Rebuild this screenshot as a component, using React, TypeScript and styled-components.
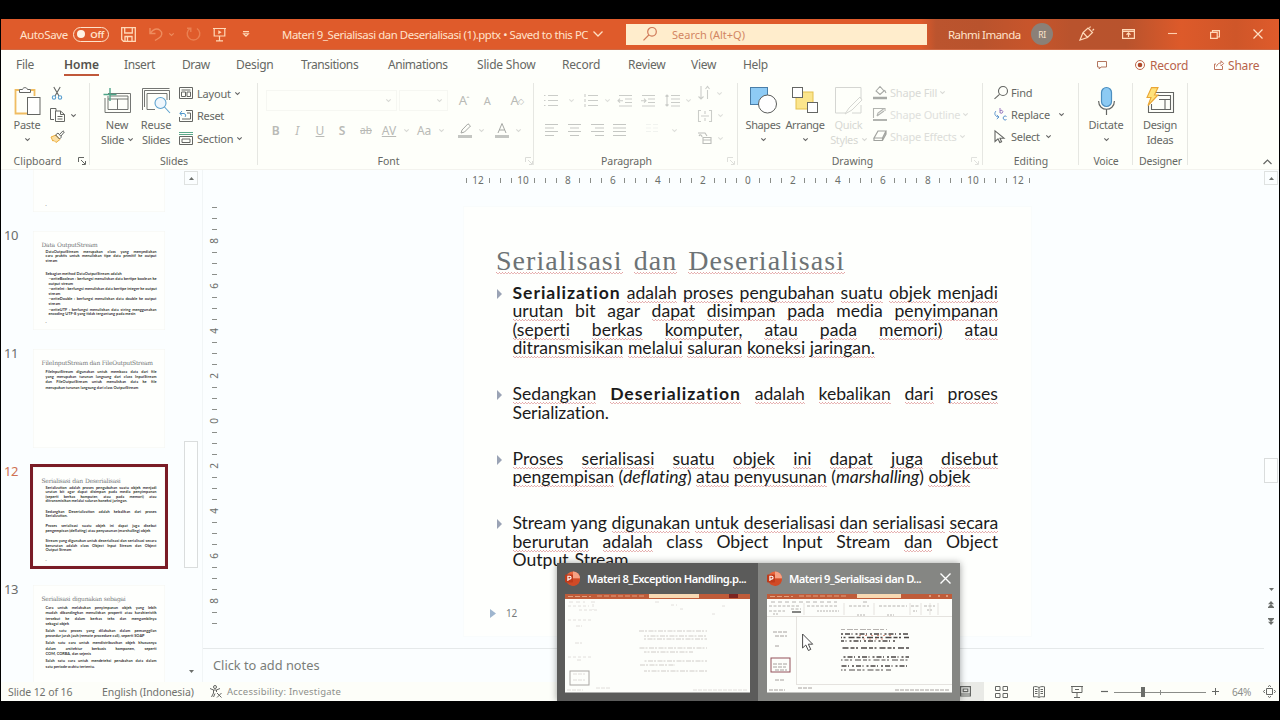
import React from "react";
import styled, { createGlobalStyle, css } from "styled-components";

const ui = `"Noto Sans", "Open Sans", sans-serif`;

const Global = createGlobalStyle`
  * { box-sizing: border-box; }
  html, body { margin: 0; padding: 0; background: #000; }
  body { font-family: ${ui}; overflow: hidden; }
`;

const Screen = styled.div`
  position: relative;
  width: 1280px;
  height: 720px;
  padding: 19px 1px 19px;
  background: #000;
  overflow: hidden;
`;
const Window = styled.div`
  display: flex;
  flex-direction: column;
  width: 1278px;
  height: 682px;
  background: #fbfeff;
  overflow: hidden;
`;

/* ---------- shared parts ---------- */
const Cell = styled.div<{ $w: number; $j?: string; $ml?: number }>`
  display: flex;
  flex: none;
  align-items: center;
  justify-content: ${(p) => p.$j || "center"};
  width: ${(p) => p.$w}px;
  margin-left: ${(p) => p.$ml || 0}px;
`;
const Label = styled.span<{ $size?: number; $ls?: number; $color?: string; $bold?: boolean }>`
  font-size: ${(p) => p.$size || 12}px;
  letter-spacing: ${(p) => p.$ls ?? -0.3}px;
  color: ${(p) => p.$color || "inherit"};
  font-weight: ${(p) => (p.$bold ? 600 : 400)};
  white-space: nowrap;
`;
const Svg = styled.svg<{ $o?: number }>`
  display: block;
  flex: none;
  overflow: visible;
  fill: none;
  opacity: ${(p) => p.$o ?? 1};
`;

type IconProps = { w: number; h: number; c?: string; sw?: number; o?: number; children: React.ReactNode };
const Icon = ({ w, h, c = "#646663", sw = 1.1, o, children }: IconProps) => (
  <Svg width={w} height={h} viewBox={`0 0 ${w} ${h}`} stroke={c} strokeWidth={sw} $o={o}>
    {children}
  </Svg>
);
const Chevron = ({ c = "#666", o = 1 }: { c?: string; o?: number }) => (
  <Icon w={5} h={3} c={c} sw={1.1} o={o}>
    <path d="M.3 .4 2.5 2.4 4.7 .4" />
  </Icon>
);

/* ---------- title bar ---------- */
const TitleBar = styled.header`
  display: flex;
  flex: none;
  align-items: center;
  height: 31px;
  padding-left: 19px;
  color: #ffe3cb;
  background: linear-gradient(90deg, #df5b2b 0, #df5b2b 920px, #bb542e 935px, #b9532d 980px, #c8552b 1030px, #b9532d 1070px, #b8532d 1125px, #dd5a2a 1180px, #cf5629 1235px, #df5b2b 1278px);
  border-bottom: 1px solid #cf6a45;
`;
const Toggle = styled.div`
  display: flex;
  flex: none;
  align-items: center;
  justify-content: space-between;
  width: 36px;
  height: 15px;
  padding: 0 4px 0 3px;
  border: 1.4px solid #ffe3cb;
  border-radius: 8px;
`;
const Knob = styled.i`
  width: 8px;
  height: 8px;
  border-radius: 50%;
  background: #fff3e3;
`;
const Search = styled.div`
  display: flex;
  flex: none;
  align-items: center;
  width: 301px;
  height: 21px;
  margin-left: 20px;
  padding-left: 17px;
  gap: 15px;
  background: #ffedcc;
`;
const Avatar = styled.div`
  display: grid;
  place-items: center;
  width: 22px;
  height: 22px;
  border-radius: 50%;
  background: #8b8077;
`;

/* ---------- tabs ---------- */
const Tabs = styled.nav`
  display: flex;
  flex: none;
  height: 28px;
  padding-left: 15px;
  color: #666864;
  background: #fefffb;
`;
const Tab = styled.div<{ $w: number; $active?: boolean }>`
  display: flex;
  flex: none;
  width: ${(p) => p.$w}px;
  height: 28px;
  padding-top: 6px;
  line-height: 17px;
  ${(p) =>
    p.$active &&
    css`
      color: #55524d;
      span {
        height: 20px;
        border-bottom: 2px solid #c0583a;
      }
    `}
`;
const TabActions = styled.div`
  display: flex;
  align-items: center;
  height: 30px;
  color: #b8634a;
`;

/* ---------- ribbon ---------- */
const Ribbon = styled.div`
  display: flex;
  flex: none;
  height: 92px;
  color: #666864;
  background: #fefffa;
  border-bottom: 1px solid #f3f3ee;
`;
const Group = styled.section<{ $w: number }>`
  display: flex;
  flex: none;
  flex-direction: column;
  width: ${(p) => p.$w}px;
  height: 91px;
  background: linear-gradient(#e6e7e2, #e6e7e2) right 5px / 1px 82px no-repeat;
`;
const GroupBody = styled.div<{ $pl?: number }>`
  display: flex;
  height: 76px;
  padding-left: ${(p) => p.$pl || 0}px;
`;
const GroupName = styled.div<{ $shift?: number }>`
  display: flex;
  align-items: center;
  justify-content: center;
  height: 14px;
  padding-left: ${(p) => p.$shift || 0}px;
`;
const Launch = styled.div<{ $ml: number; $o?: number }>`
  margin-left: ${(p) => p.$ml}px;
  opacity: ${(p) => p.$o ?? 1};
`;
const BigButton = styled.div<{ $w: number; $o?: number }>`
  display: flex;
  flex: none;
  flex-direction: column;
  align-items: center;
  width: ${(p) => p.$w}px;
  padding-top: 6px;
  opacity: ${(p) => p.$o ?? 1};
`;
const BigIcon = styled.div`
  display: grid;
  place-items: center;
  height: 33px;
`;
const BigLine = styled.div`
  display: flex;
  align-items: center;
  gap: 4px;
  height: 15px;
  line-height: 15px;
`;
const Stack = styled.div<{ $w: number; $ml?: number; $pt?: number; $rh?: number }>`
  display: grid;
  flex: none;
  grid-auto-rows: ${(p) => p.$rh || 22.5}px;
  width: ${(p) => p.$w}px;
  margin-left: ${(p) => p.$ml || 0}px;
  padding-top: ${(p) => p.$pt ?? 4}px;
`;
const Row = styled.div<{ $gap?: number; $o?: number; $pl?: number }>`
  display: flex;
  align-items: center;
  gap: ${(p) => p.$gap ?? 4}px;
  padding-left: ${(p) => p.$pl ?? 0}px;
  opacity: ${(p) => p.$o ?? 1};
`;
const TwoRows = styled.div`
  display: grid;
  grid-template-rows: 22px 22px;
  row-gap: 8px;
  padding-top: 11px;
`;
const ToolRow = styled.div`
  display: flex;
  align-items: center;
  color: #b9bab6;
`;
const Combo = styled.div<{ $w: number; $ml?: number }>`
  display: flex;
  align-items: center;
  justify-content: flex-end;
  width: ${(p) => p.$w}px;
  height: 21px;
  margin-left: ${(p) => p.$ml || 0}px;
  padding-right: 5px;
  border: 1px solid #f6f7f2;
`;
const Strike = styled.span`
  font-size: 10px;
  text-decoration: line-through;
`;
const Under = styled.span`
  font-size: 12px;
  text-decoration: underline;
`;

/* ---------- work area ---------- */
const Work = styled.main`
  display: flex;
  flex: none;
  height: 512px;
  background: #fbfeff;
`;
const SlideList = styled.aside`
  width: 183px;
  height: 512px;
  overflow: hidden;
`;
const SlideRow = styled.div<{ $first?: boolean }>`
  display: flex;
  height: 118px;
  margin-top: ${(p) => (p.$first ? -60 : 0)}px;
`;
const SlideNo = styled.div<{ $on?: boolean }>`
  width: 29px;
  padding: 0 0 0 3px;
  font-size: 13px;
  line-height: 15px;
  letter-spacing: -0.4px;
  color: ${(p) => (p.$on ? "#cf7152" : "#6b6d6b")};
`;
const Thumb = styled.div<{ $on?: boolean }>`
  display: flex;
  flex-direction: column;
  width: 138px;
  height: 105px;
  padding: 9px 8.5px 0 8.5px;
  border: 3px solid transparent;
  background: #fefffd;
  background-clip: padding-box;
  box-shadow: inset 0 0 0 0.5px #f3f5f2;
  ${(p) =>
    p.$on &&
    css`
      border-color: #7a1c26;
    `}
`;
const ThumbTitle = styled.div<{ $w: number }>`
  width: ${(p) => p.$w}px;
  height: 10px;
  font: 6px/10px "DejaVu Serif", serif;
  letter-spacing: -0.25px;
  white-space: nowrap;
  text-align-last: justify;
  color: #777a7c;
`;
const ThumbPara = styled.div<{ $mt?: number; $lh?: number; $in?: number }>`
  margin-top: ${(p) => p.$mt || 0}px;
  padding-left: ${(p) => 4 + (p.$in || 0)}px;
  font: 700 3.9px/${(p) => p.$lh || 4.4}px Lato, sans-serif;
  color: #333;
`;
const ThumbLine = styled.div<{ $end?: boolean }>`
  white-space: nowrap;
  text-align-last: ${(p) => (p.$end ? "left" : "justify")};
`;
const ScrollTrack = styled.div<{ $w: number }>`
  display: flex;
  flex: none;
  flex-direction: column;
  align-items: center;
  width: ${(p) => p.$w}px;
  height: 512px;
  padding-top: 1px;
`;
const ScrollButton = styled.div<{ $plain?: boolean }>`
  display: grid;
  flex: none;
  place-items: center;
  width: 14px;
  height: 14px;
  border: 1px solid ${(p) => (p.$plain ? "transparent" : "#dfe2e1")};
`;
const ScrollThumb = styled.div<{ $h: number; $mt: number }>`
  flex: none;
  width: 14px;
  height: ${(p) => p.$h}px;
  margin-top: ${(p) => p.$mt}px;
  border: 1px solid #dadddd;
  background: #fdffff;
`;
const Spacer = styled.div<{ $h: number }>`
  flex: none;
  height: ${(p) => p.$h}px;
`;
const Editor = styled.div`
  display: flex;
  flex-direction: column;
  width: 1062px;
  margin-left: 4px;
  border-left: 1px solid #f1f5f6;
`;
const HRuler = styled.div`
  display: flex;
  flex: none;
  height: 20px;
  margin-left: 258px;
  align-items: center;
`;
const HMark = styled.div`
  display: flex;
  flex: none;
  justify-content: center;
  width: 11.25px;
  font-size: 10px;
  line-height: 12px;
  color: #6c6f6b;
`;
const HTick = styled.i`
  width: 1px;
  height: 5px;
  background: #8b8e8a;
`;
const Stage = styled.div`
  display: flex;
  flex: none;
  height: 459px;
  border-bottom: 1px solid #e5e9ea;
`;
const VRuler = styled.div`
  width: 22px;
  padding-top: 11.5px;
`;
const VMark = styled.div`
  display: grid;
  place-items: center;
  height: 11.25px;
  font-size: 10px;
  line-height: 10px;
  color: #6c6f6b;
`;
const VNum = styled.span`
  transform: rotate(-90deg);
`;
const VTick = styled.i`
  width: 5px;
  height: 1px;
  background: #8b8e8a;
`;
const Slide = styled.article`
  width: 567px;
  height: 429px;
  margin: 17px 0 0 239px;
  padding: 40px 32px 0;
  background: #fefffd;
  box-shadow: 0 0 0 1px #f9fcfc;
`;
/* two offset dotted rows make the zigzag of the spelling mark */
const Wavy = styled.span`
  background:
    linear-gradient(90deg, #e2a4a4 50%, transparent 50%) 0 calc(100% - 1px) / 3px 1px repeat-x,
    linear-gradient(90deg, transparent 50%, #e9b9b9 50%) 0 100% / 3px 1px repeat-x;
`;
const SlideTitle = styled.h1`
  width: 349px;
  height: 28px;
  margin: 0;
  font: 400 28px/28px "Liberation Serif", serif;
  letter-spacing: 1.05px;
  white-space: nowrap;
  text-align-last: justify;
  color: #6d7375;
  ${Wavy} {
    background-position: 0 calc(100% - 3px), 0 calc(100% - 2px);
  }
`;
const Bullets = styled.ul`
  margin: 9px 0 0;
  padding: 0;
  list-style: none;
`;
const Bullet = styled.li<{ $gap: number }>`
  display: flex;
  margin-bottom: ${(p) => p.$gap}px;
`;
const BulletMark = styled.div`
  width: 16.5px;
  padding: 5px 0 0 1px;
`;
const TextLine = styled.div<{ $w?: number; $ls?: number }>`
  width: ${(p) => p.$w || 485.5}px;
  font: 400 17.6px/18.45px Lato, sans-serif;
  font-variant-ligatures: none;
  letter-spacing: ${(p) => p.$ls || 0}px;
  white-space: nowrap;
  text-align-last: justify;
  color: #1b1b1b;
  b {
    letter-spacing: 0.95px;
  }
`;
const Footer = styled.div`
  display: flex;
  align-items: center;
  height: 14px;
  margin: 37px 0 0 -6px;
  gap: 10px;
`;
const Notes = styled.div`
  display: flex;
  align-items: center;
  height: 31px;
  padding-left: 10px;
`;

/* ---------- status bar ---------- */
const Status = styled.footer`
  display: flex;
  flex: none;
  align-items: center;
  height: 19px;
  color: #70726e;
  background: #fdfef9;
`;
const NormalView = styled.div`
  display: flex;
  align-items: center;
  width: 34px;
  height: 19px;
  margin-left: 606px;
  padding-left: 10px;
  background: #e9eae6;
`;

/* ---------- task switcher ---------- */
const Switcher = styled.div`
  position: absolute;
  left: 557px;
  top: 563px;
  display: flex;
  width: 403px;
  height: 138px;
  box-shadow: 0 0 7px rgba(0, 0, 0, 0.38);
`;
const TaskCard = styled.div<{ $hot?: boolean }>`
  display: flex;
  flex-direction: column;
  width: ${(p) => (p.$hot ? 202 : 201)}px;
  height: 138px;
  padding-left: ${(p) => (p.$hot ? 9 : 8)}px;
  background: ${(p) => (p.$hot ? "#858683" : "#5b5b5a")};
`;
const TaskHead = styled.div`
  display: flex;
  align-items: center;
  height: 31px;
  color: #fff;
`;
const Backdrop = styled.div`
  height: 19px;
  background: #000;
  position: absolute;
  left: 0;
  bottom: 0;
  width: 1280px;
`;
const Pointer = styled.div`
  position: absolute;
  left: 802px;
  top: 633px;
`;

/* ---------- drawings ---------- */
const PptLogo = () => (
  <Svg width="15" height="15" viewBox="0 0 15 15">
    <circle cx="8" cy="7.5" r="7" fill="#e8643c" />
    <path d="M8 .5a7 7 0 0 1 7 7H8z" fill="#f6a183" />
    <path d="M1.5 10.500A7 7 0 0 0 15 7.500H8z" fill="#d04a26" />
    <rect x="0" y="3.500" width="8" height="8" rx="1" fill="#bf3a1a" />
    <path d="M2.900 10V5.200h1.700a1.400 1.400 0 0 1 0 2.900H3" stroke="#fff" strokeWidth="1.100" />
  </Svg>
);

const Preview = ({ hot }: { hot?: boolean }) => {
  const ink = hot ? "#4a4644" : "#c4c0bd";
  const rows = hot
    ? [[40, 142], [43.5, 142], [47, 130], [54, 142], [63, 142], [66, 142], [72, 142], [76, 124]]
    : [[37, 142], [42, 142], [45, 142], [54, 142], [58, 128], [67, 142], [71, 110], [77, 142]];
  return (
    <Svg width="185" height="99" viewBox="0 0 185 99">
      <rect width="185" height="98.5" fill="#fdfefb" />
      <rect width="185" height="5" fill="#bf5c3a" />
      <rect x={hot ? 90 : 84} width={hot ? 44 : 50} height="4" fill="#f8d9b3" />
      <path d="M3 2.500H26M32 2H80" stroke="#eeb08f" strokeWidth=".8" strokeDasharray="5 2" />
      {!hot && <rect x="164" y="0" width="9" height="4" fill="#7d2420" />}
      {hot && <path d="M162 2h2M171 2h2M179 2h2" stroke="#ffd6b8" />}
      <g stroke={hot ? "#a3a19e" : "#dad8d5"} strokeWidth=".8">
        <path d={hot ? "M4 8H70M96 8H103" : "M4 8H20M26 8H31M90 8H95"} strokeDasharray="4 3" />
        {hot ? (
          <>
            <path d="M2 12H33M2 17H18M24 15H34M40 12H70M82 12H102M112 12H140M144 12H152M157 12H168" strokeDasharray="3 1.500" />
            <path d="M25 18H34" stroke="#333" strokeWidth="1.200" />
            <path d="M6 20H12M50 17H72M90 21H98M120 21H127M146 17H150M160 16H166" strokeDasharray="2 1" />
            <path d="M37 9V21M77 9V21M107 9V21M143 9V21M154 9V21M163 9V21M171 9V21M0 22.500H185M29.500 22V90M29 90.500H185" stroke="#dedcd8" />
          </>
        ) : (
          <path d="M3 12H24M28 10V16M14 16H32M106 11H112M115 15H120M157 12H162M147 20H152M3 26H26M3 63H26" strokeDasharray="3 2" />
        )}
      </g>
      {hot && <path d="M74 35.500H120" stroke="#b5b2af" strokeWidth="1" strokeDasharray="4 2 6 1" />}
      <g stroke={ink} strokeWidth={hot ? 1.5 : 0.8}>
        {rows.map(([y, x], i) => (
          <path
            key={y}
            d={`M${i % 3 && !hot ? 79 : 74} ${y}H${x}`}
            strokeDasharray={hot ? (i % 2 ? "4 1.500 2 3 6 2" : "2 2 5 1.500 1 3") : "5 1 2 1.500"}
            strokeDashoffset={i * 3}
            opacity={hot && i > 3 && i % 2 ? 0.65 : 1}
          />
        ))}
      </g>
      {hot && <path d="M92 41.500H124M96 45H116" stroke="#d8806c" strokeWidth=".8" strokeDasharray="2 4" />}
      <g stroke={hot ? "#8f8c89" : "#d8d6d3"} strokeWidth=".8" strokeDasharray="4 1">
        <path d={hot ? "M6 38H21M8 42H20M8 52H12M8 86H18" : "M11 32H17M10 49H17M12 66H17"} />
        <path d={hot ? "M6 70H20M6 73H19M8 76H20" : "M8 80H20M8 86H20"} />
        <path d="M2 96H18M31 94H46M128 96H182" />
      </g>
      <rect x={hot ? 4 : 5} y={hot ? 64 : 77} width="19" height="14" stroke={hot ? "#93505a" : "#a9a6a3"} />
    </Svg>
  );
};

/* ---------- data ---------- */
const tabs: [string, number, number][] = [
  ["File", 48, -0.3],
  ["Home", 60, 0],
  ["Insert", 58, -0.4],
  ["Draw", 54, -0.5],
  ["Design", 65, -0.3],
  ["Transitions", 87, -0.4],
  ["Animations", 89, -0.45],
  ["Slide Show", 85, -0.2],
  ["Record", 66, -0.2],
  ["Review", 63, -0.3],
  ["View", 52, -0.3],
  ["Help", 60, -0.3],
];

const W = ({ t }: { t: string }) => <Wavy>{t}</Wavy>;
/* words that start with an underscore carry the spelling mark */
const mark = (s: string) =>
  s.split(" ").map((w, i) => (
    <React.Fragment key={i}>
      {i > 0 && " "}
      {w.startsWith("_") ? <W t={w.slice(1)} /> : w}
    </React.Fragment>
  ));

const range = (a: number, b: number) => Array.from({ length: b - a + 1 }, (_, i) => a + i);

const ThumbText = ({ lines, mt, lh, inset, last = true }: { lines: string[]; mt?: number; lh?: number; inset?: number; last?: boolean }) => (
  <ThumbPara $mt={mt} $lh={lh} $in={inset}>
    {lines.map((l, i) => (
      <ThumbLine key={i} $end={last && i === lines.length - 1}>
        {l}
      </ThumbLine>
    ))}
  </ThumbPara>
);

const ListGlyph = ({ kind }: { kind: "bul" | "num" | "in" | "out" | "sp" }) => (
  <Icon w={15} h={13} c="#cbcdc9">
    <path d={kind === "bul" ? "M4 1.500H14M4 6.500H14M4 11.500H14M0 1.500h1.500M0 6.500h1.500M0 11.500h1.500" : kind === "num" ? "M4 1.500H14M4 6.500H14M4 11.500H14M1 0v3M1 5v3M1 10v3" : kind === "sp" ? "M6 1.500H15M6 5H15M6 8.500H15M6 12H15M2 1V12M.5 2.500 2 1 3.500 2.500M.5 10.500 2 12 3.500 10.500" : kind === "in" ? "M1 1.500H14M7 5H14M7 8.500H14M1 12H14M0 6.700h5M3 4.700l2 2-2 2" : "M1 1.500H14M7 5H14M7 8.500H14M1 12H14M0 6.700h5M2 4.700l-2 2 2 2"} />
  </Icon>
);
const AlignGlyph = ({ a }: { a: 0 | 1 | 2 | 3 }) => {
  const x = [[0, 9], [2, 11], [4, 13], [0, 13]][a];
  return (
    <Icon w={13} h={12} c="#c5c7c3">
      <path d={`M0 .5H13M${x[0]} 4H${x[1]}M0 7.500H13M${x[0]} 11.500H${x[1]}`} />
    </Icon>
  );
};
const Corner = () => (
  <Icon w={8} h={8} sw={1}>
    <path d="M.5 5V.5H6M3 3l4 4M7.500 4v3.500H4" />
  </Icon>
);
const ArrowUp = () => (
  <Svg width="5" height="3" viewBox="0 0 5 3">
    <path d="M0 3 2.500 0 5 3z" fill="#6c6f6c" />
  </Svg>
);
const ArrowDown = () => (
  <Svg width="5" height="3" viewBox="0 0 5 3">
    <path d="M0 0H5L2.500 3z" fill="#6c6f6c" />
  </Svg>
);
const BulletArrow = () => (
  <BulletMark>
    <Svg width="5" height="10" viewBox="0 0 5 10">
      <path d="M0 0 5 5 0 10z" fill="#9aa3b5" />
    </Svg>
  </BulletMark>
);

export default function App() {
  return (
    <Screen>
      <Global />
      <Window>
        <TitleBar>
          <Cell $w={53} $j="flex-start"><Label $size={11.5} $ls={-0.35}>AutoSave</Label></Cell>
          <Toggle><Knob /><Label $size={9.5} $ls={-0.3} $bold>Off</Label></Toggle>
          <Cell $w={38}>
            <Icon w={15} h={15} c="#ffd9b8" sw={1.3}>
              <path d="M.7 .7H14.300V14.300H2.500L.7 12.500zM3.700 .7V6H11.300V.7M4 14V9.500H11V14M6.500 10v4" />
            </Icon>
          </Cell>
          <Cell $w={18}>
            <Icon w={14} h={14} c="#ee8d5f" sw={1.4}>
              <path d="M1 1V6.500H6.500M1.500 6C4 2 8 1 11 3.200s2 6-1 7.800l-4 2.500" />
            </Icon>
          </Cell>
          <Cell $w={12}><Chevron c="#ee8d5f" /></Cell>
          <Cell $w={32}>
            <Icon w={15} h={14} c="#ea8052" sw={1.4}>
              <path d="M4 1.500A6.300 6.300 0 1 0 11 1.500M1 1.200H4.800V5" />
            </Icon>
          </Cell>
          <Cell $w={20}>
            <Icon w={13} h={15} c="#ffd9b8" sw={1.2}>
              <path d="M0 1.500H13M1.200 1.500V9H11.800V1.500M6.500 9V13.500M3 13.800H10" />
              <path d="M5.300 3.200V7.300L8.600 5.200z" fill="#ffd9b8" stroke="none" />
            </Icon>
          </Cell>
          <Cell $w={34}>
            <Icon w={6} h={6} c="#ffd9b8"><path d="M0 .6H6M.6 2.800H5.400L3 5.200z" /></Icon>
          </Cell>
          <Cell $w={308} $ml={19} $j="flex-start">
            <Label $size={11.4} $ls={-0.43}>Materi 9_Serialisasi dan Deserialisasi (1).pptx • Saved to this PC</Label>
          </Cell>
          <Cell $w={16}><Icon w={10} h={6} c="#ffe0c4" sw={1.3}><path d="M.5 .5 5 5 9.500 .5" /></Icon></Cell>
          <Search>
            <Icon w={14} h={14} c="#d07a58" sw={1.2}><circle cx="9" cy="4.800" r="4.300" /><path d="M5.800 8 .5 13.300" /></Icon>
            <Label $size={11} $ls={0} $color="#d28663">Search (Alt+Q)</Label>
          </Search>
          <Cell $w={73} $ml={21} $j="flex-start"><Label $size={11.5} $ls={-0.55}>Rahmi Imanda</Label></Cell>
          <Cell $w={42}><Avatar><Label $size={8.5}>RI</Label></Avatar></Cell>
          <Cell $w={46}>
            <Icon w={15} h={14} c="#ffd9b8" sw={1.2}>
              <path d="M1 13 4 5.500 9 1 13.500 5.500 8.500 10.500zM4 5.500 8.500 10.500M9 1 11.500 3.500M10.500 1 11.500 -.5M13.500 3.500 15 2" />
            </Icon>
          </Cell>
          <Cell $w={38}>
            <Icon w={13} h={10} c="#ffd9b8" sw={1.2}>
              <path d="M.6 .6H12.400V9.400H.6zM.6 2.300H12.400M6.500 8V4M4.500 5.700 6.500 3.900 8.500 5.700" />
            </Icon>
          </Cell>
          <Cell $w={50}><Icon w={9} h={2} c="#ffcfae"><path d="M0 .5H9" /></Icon></Cell>
          <Cell $w={36}>
            <Icon w={10} h={9} c="#ffd9b8" sw={1.2}>
              <path d="M.6 2.300H7.200V8.400H.6zM2.500 2V.6H9.400V7H7.500" />
            </Icon>
          </Cell>
          <Cell $w={46} $j="flex-end">
            <Cell $w={26}><Icon w={10} h={10} c="#ffe0c4" sw={1.2}><path d="M.5 .5 9.500 9.500M9.500 .5 .5 9.500" /></Icon></Cell>
            <Cell $w={8} />
          </Cell>
        </TitleBar>

        <Tabs>
          {tabs.map(([name, w, ls]) => (
            <Tab key={name} $w={w} $active={name === "Home"}>
              <Label $size={12} $ls={ls} $bold={name === "Home"}>{name}</Label>
            </Tab>
          ))}
          <TabActions>
            <Cell $w={22} $ml={288}>
              <Icon w={10} h={9} c="#b3765f" sw={1}><path d="M.5 .5H9.500V6H4L2.200 8V6H.5z" /></Icon>
            </Cell>
            <Cell $w={12} $ml={21}>
              <Svg width="10" height="10" viewBox="0 0 10 10"><circle cx="5" cy="5" r="4.500" stroke="#c0654a" /><circle cx="5" cy="5" r="2.300" fill="#b04a2c" /></Svg>
            </Cell>
            <Cell $w={61} $ml={4} $j="flex-start"><Label $size={12} $ls={-0.2}>Record</Label></Cell>
            <Cell $w={16}>
              <Icon w={10} h={10} c="#c0765e" sw={1}><path d="M2 4H.5V9.500H8.500V6M2.500 6.500C3 4 5 3 7 3V.8L9.700 3.500 7 6V4.500" /></Icon>
            </Cell>
            <Cell $w={36} $ml={1} $j="flex-start"><Label $size={12} $ls={-0.2}>Share</Label></Cell>
          </TabActions>
        </Tabs>

        <Ribbon>
          <Group $w={89}>
            <GroupBody $pl={6}>
              <BigButton $w={40}>
                <BigIcon>
                  <Icon w={27} h={30} sw={1}>
                    <path d="M5 4H1.500V27.500H13M17 4H20.500V10" stroke="#f0bd62" strokeWidth="1.800" />
                    <path d="M5.500 6.500V3.500H8.500C9 1 13 1 13.500 3.500H16.500V6.500z" fill="#fff" />
                    <rect x="13.500" y="11.500" width="12.500" height="17" fill="#fff" />
                  </Icon>
                </BigIcon>
                <BigLine><Label $size={11} $ls={-0.25}>Paste</Label></BigLine>
                <BigLine><Chevron /></BigLine>
              </BigButton>
              <Stack $w={34} $ml={2} $pt={5} $rh={21.5}>
                <Row $pl={3}>
                  <Icon w={10} h={13} sw={1.1}>
                    <path d="M1.800 0 7 9M8.200 0 3 9" />
                    <g stroke="#5a9fd0"><circle cx="2" cy="10.500" r="1.700" /><circle cx="8" cy="10.500" r="1.700" /></g>
                  </Icon>
                </Row>
                <Row $gap={6} $pl={1}>
                  <Icon w={15} h={14} sw={1}><path d="M4 11.500H.5V.5H6L6 3M5.500 3H10.500L14.500 6.500V13.500H5.500zM10.500 3V6.500H14.500M7.500 8.500H12.500M7.500 11H12.500" /></Icon>
                  <Chevron />
                </Row>
                <Row $pl={1}>
                  <Icon w={15} h={13} sw={1}>
                    <path d="M1 7 6 5 10 9.500 6 12.500 4 10.500 2.800 11z" fill="#fbe0a5" stroke="#eeae3c" />
                    <path d="M5.500 5 8 3 11.500 7 9.500 9zM9.500 4.500 13 .8 14.300 2 11 6" />
                  </Icon>
                </Row>
              </Stack>
            </GroupBody>
            <GroupName $shift={9}><Label $size={10.5} $ls={0}>Clipboard</Label><Launch $ml={17}><Corner /></Launch></GroupName>
          </Group>

          <Group $w={168}>
            <GroupBody $pl={7}>
              <BigButton $w={40}>
                <BigIcon>
                  <Icon w={31} h={26} sw={1.1}>
                    <path d="M6 5.500H28.500V24.500H3V10M6 8V21.500H26V8H8M6 11H26M15.500 11V21.500" strokeWidth=".9" />
                    <path d="M8 0V13M1.500 6.500H14.500" stroke="#4fa588" strokeWidth="1.400" />
                  </Icon>
                </BigIcon>
                <BigLine><Label $size={11} $ls={-0.2}>New</Label></BigLine>
                <BigLine><Label $size={11} $ls={-0.3}>Slide</Label><Chevron /></BigLine>
              </BigButton>
              <BigButton $w={38}>
                <BigIcon>
                  <Icon w={28} h={26} sw={1.1}>
                    <path d="M2.500 19V2.500H27.500V12M.5 22V.500H27.500M5 21.500V5.500H25V12M5 21.500H13" strokeWidth=".9" />
                    <circle cx="18.500" cy="15" r="5.500" fill="#eef7fd" stroke="#5fa3cf" />
                    <path d="M22.500 19 28 25" stroke="#5fa3cf" />
                  </Icon>
                </BigIcon>
                <BigLine><Label $size={11} $ls={-0.2}>Reuse</Label></BigLine>
                <BigLine><Label $size={11} $ls={-0.3}>Slides</Label></BigLine>
              </BigButton>
              <Stack $w={75} $ml={4} $pt={4}>
                <Row>
                  <Icon w={14} h={12} sw={1}><path d="M.5 .5H13.500V11.500H.5zM2.500 3H11.500M2.500 5H6.500V9.500H2.500zM8 5H11.500V9.500H8z" /></Icon>
                  <Label $size={11} $ls={-0.2}>Layout</Label><Chevron />
                </Row>
                <Row>
                  <Icon w={14} h={12} sw={1}><path d="M7 .5H13.500V11.500H.5V7M8 3H11.500V9H3" /><path d="M1 3.500H5C7 4 7 6 6 7M3 1 .8 3.500 3 5.500" stroke="#4f97cc" /></Icon>
                  <Label $size={11} $ls={-0.3}>Reset</Label>
                </Row>
                <Row>
                  <Icon w={14} h={13} sw={1}><path d="M.5 4.500H13.500V12.500H.5zM3 7H11V10.500H3z" /><path d="M0 .5H14M0 2.500H14" stroke="#5aa98a" /></Icon>
                  <Label $size={11} $ls={-0.2}>Section</Label><Chevron />
                </Row>
              </Stack>
            </GroupBody>
            <GroupName><Label $size={10.5} $ls={-0.1}>Slides</Label></GroupName>
          </Group>

          <Group $w={276}>
            <GroupBody $pl={8}>
              <TwoRows>
                <ToolRow>
                  <Combo $w={131}><Chevron c="#d8d9d5" /></Combo>
                  <Combo $w={49} $ml={2}><Chevron c="#d8d9d5" /></Combo>
                  <Cell $w={22} $ml={5}><Label $size={13} $ls={-1}>A</Label><Label $size={8}>ˆ</Label></Cell>
                  <Cell $w={24}><Label $size={11}>A</Label></Cell>
                  <Cell $w={18} $ml={9}><Label $size={13} $ls={-1}>A</Label><Label $size={8}>◇</Label></Cell>
                </ToolRow>
                <ToolRow>
                  <Cell $w={19}><Label $size={12} $bold>B</Label></Cell>
                  <Cell $w={24}><Label $size={12}><i>I</i></Label></Cell>
                  <Cell $w={22}><Under>U</Under></Cell>
                  <Cell $w={22}><Label $size={12} $bold>S</Label></Cell>
                  <Cell $w={26}><Strike>ab</Strike></Cell>
                  <Cell $w={20}><Under>AV</Under></Cell>
                  <Cell $w={14}><Chevron c="#d8d9d5" /></Cell>
                  <Cell $w={22}><Label $size={12}>Aa</Label></Cell>
                  <Cell $w={12}><Chevron c="#d8d9d5" /></Cell>
                  <Cell $w={16} $ml={10}>
                    <Icon w={14} h={15} c="#a5a7a3" sw={1}>
                      <path d="M3 10 4 7 10 .8 12.500 3 6.500 9z" /><path d="M0 13.500H14" strokeWidth="3" stroke="#c4c6c2" />
                    </Icon>
                  </Cell>
                  <Cell $w={16}><Chevron c="#d8d9d5" /></Cell>
                  <Cell $w={16} $ml={5}>
                    <Icon w={14} h={15} c="#a5a7a3" sw={1}>
                      <path d="M3 10 7 .5 11 10M4.300 7H9.700" /><path d="M0 13.500H14" strokeWidth="3" stroke="#c4c6c2" />
                    </Icon>
                  </Cell>
                  <Cell $w={16}><Chevron c="#d8d9d5" /></Cell>
                </ToolRow>
              </TwoRows>
            </GroupBody>
            <GroupName $shift={118}><Label $size={10.5} $ls={0}>Font</Label><Launch $ml={125} $o={0.22}><Corner /></Launch></GroupName>
          </Group>

          <Group $w={204}>
            <GroupBody $pl={8}>
              <TwoRows>
                <ToolRow>
                  <Cell $w={18}><ListGlyph kind="bul" /></Cell>
                  <Cell $w={22}><Chevron c="#dedfdb" /></Cell>
                  <Cell $w={18}><ListGlyph kind="num" /></Cell>
                  <Cell $w={14}><Chevron c="#dedfdb" /></Cell>
                  <Cell $w={22} $ml={0}><ListGlyph kind="out" /></Cell>
                  <Cell $w={24}><ListGlyph kind="in" /></Cell>
                  <Cell $w={24}><ListGlyph kind="sp" /></Cell>
                  <Cell $w={8}><Chevron c="#dedfdb" /></Cell>
                </ToolRow>
                <ToolRow>
                  <Cell $w={18}><AlignGlyph a={0} /></Cell>
                  <Cell $w={28}><AlignGlyph a={1} /></Cell>
                  <Cell $w={18}><AlignGlyph a={2} /></Cell>
                  <Cell $w={26}><AlignGlyph a={3} /></Cell>
                  <Cell $w={40}><Icon w={12} h={12} c="#f1f3ef"><path d="M0 .5H5M7 .5H12M0 4H5M7 4H12M0 7.500H5M7 7.500H12" /></Icon></Cell>
                  <Cell $w={4}><Chevron c="#dedfdb" /></Cell>
                </ToolRow>
              </TwoRows>
              <Stack $w={30} $ml={6} $pt={4}>
                <Row $gap={6}>
                  <Icon w={13} h={14} c="#cbcdc9"><path d="M3 0V13M.5 10.500 3 13 5.500 10.500M9.500 13V4M7.500 3 9.500 .5 11.500 3" /></Icon>
                  <Chevron c="#dedfdb" />
                </Row>
                <Row $gap={6}>
                  <Icon w={14} h={12} c="#cbcdc9"><path d="M3 .5H.5V11.500H3M11 .5H13.500V11.500H11M3 6H11M7 1V4M7 8V11" /></Icon>
                  <Chevron c="#dedfdb" />
                </Row>
                <Row $gap={6}>
                  <Icon w={14} h={12} c="#bcbeba"><path d="M0 1H7L9 4M5 5.500H13V11.500H5zM5 8H13M1 4C2 2 4 3 4 5" /></Icon>
                  <Chevron c="#dedfdb" />
                </Row>
              </Stack>
            </GroupBody>
            <GroupName $shift={64}><Label $size={10.5} $ls={-0.1}>Paragraph</Label><Launch $ml={75} $o={0.2}><Corner /></Launch></GroupName>
          </Group>

          <Group $w={245}>
            <GroupBody $pl={4}>
              <BigButton $w={42}>
                <BigIcon>
                  <Icon w={27} h={27} sw={1}>
                    <rect x=".5" y=".5" width="17" height="17" fill="#8ecbf5" stroke="#4a7ea8" />
                    <circle cx="17.500" cy="17" r="9" fill="#fff" stroke="#5b5d5b" />
                  </Icon>
                </BigIcon>
                <BigLine><Label $size={11} $ls={-0.4}>Shapes</Label></BigLine>
                <BigLine><Chevron /></BigLine>
              </BigButton>
              <BigButton $w={42}>
                <BigIcon>
                  <Icon w={26} h={27} sw={1}>
                    <rect x="4" y="5" width="17" height="17" fill="#fbe58c" stroke="#e3c04c" />
                    <rect x=".5" y=".5" width="10" height="10" fill="#fff" />
                    <rect x="15.500" y="15.500" width="10" height="10" fill="#fff" />
                  </Icon>
                </BigIcon>
                <BigLine><Label $size={11} $ls={-0.4}>Arrange</Label></BigLine>
                <BigLine><Chevron /></BigLine>
              </BigButton>
              <BigButton $w={45} $o={0.26}>
                <BigIcon>
                  <Icon w={27} h={28} sw={1}>
                    <path d="M11 26H.5V.5H26V12M26 18V26H17M10 27 14 21 25 10 27 13 17 23z" />
                  </Icon>
                </BigIcon>
                <BigLine><Label $size={11}>Quick</Label></BigLine>
                <BigLine><Label $size={11} $ls={-0.4}>Styles</Label><Chevron /></BigLine>
              </BigButton>
              <Stack $w={105} $ml={2} $pt={3} $rh={22}>
                <Row $gap={3}>
                  <Icon w={14} h={14} c="#a7a9a5"><path d="M3 6 7 1.500 11 6 7 9.500zM11.500 5 13 8" /><path d="M0 13H14" strokeWidth="2.500" /></Icon>
                  <Label $size={11} $ls={-0.2} $color="#d9dad6">Shape Fill</Label><Chevron c="#d9dad6" />
                </Row>
                <Row $gap={3}>
                  <Icon w={14} h={14} c="#b2b4b0"><path d="M.5 11V1.500H12V4M4 9 5 6 10.500 2M4 9 11 4" /><path d="M0 13H14" strokeWidth="2" /></Icon>
                  <Label $size={11} $ls={-0.2} $color="#e0e1dd">Shape Outline</Label><Chevron c="#dcddd9" />
                </Row>
                <Row $gap={3}>
                  <Icon w={14} h={12} c="#a0a29e" sw={1.2}><path d="M1 8 5 1H13L9.500 8zM1 8V10.500H9.500L13 4V1M9.500 8V10.500" /></Icon>
                  <Label $size={11} $ls={-0.2} $color="#dcddd9">Shape Effects</Label><Chevron c="#dcddd9" />
                </Row>
              </Stack>
            </GroupBody>
            <GroupName $shift={90}><Label $size={10.5} $ls={0}>Drawing</Label><Launch $ml={98} $o={0.18}><Corner /></Launch></GroupName>
          </Group>

          <Group $w={96}>
            <GroupBody $pl={11}>
              <Stack $w={80} $pt={3} $rh={22}>
                <Row $gap={3}>
                  <Icon w={14} h={13}><circle cx="9" cy="5" r="4.500" /><path d="M5.500 8.300.5 12.800" /></Icon>
                  <Label $size={11} $ls={-0.2}>Find</Label>
                </Row>
                <Row $gap={4}>
                  <Icon w={13} h={14} c="#5a93cd" sw={1}>
                    <path d="M6 1V6M6 4a1.500 1.500 0 1 1 0 1.500" stroke="#9a7cc0" />
                    <path d="M2 4C0 6 .5 9.500 4.500 10M2.800 8 5 10 2.800 12M12.500 9.500A2 2 0 1 0 12.500 12.500" />
                  </Icon>
                  <Label $size={11} $ls={-0.2}>Replace</Label><Cell $w={16}><Chevron /></Cell>
                </Row>
                <Row $gap={6}>
                  <Icon w={11} h={13}><path d="M1 .8V11.500L4 8.800 5.800 12.500 7.600 11.700 6 8.200H10z" /></Icon>
                  <Label $size={11} $ls={-0.3}>Select</Label><Chevron />
                </Row>
              </Stack>
            </GroupBody>
            <GroupName><Label $size={10.5} $ls={0}>Editing</Label></GroupName>
          </Group>

          <Group $w={54}>
            <GroupBody>
              <BigButton $w={54}>
                <BigIcon>
                  <Icon w={17} h={28} sw={1.2}>
                    <rect x="3.500" y=".5" width="10" height="19" rx="5" fill="#8ccaf3" stroke="#4c8fc0" />
                    <path d="M.6 14C.6 25 16.400 25 16.400 14M8.500 22.500V28" />
                  </Icon>
                </BigIcon>
                <BigLine><Label $size={11} $ls={-0.2}>Dictate</Label></BigLine>
                <BigLine><Chevron /></BigLine>
              </BigButton>
            </GroupBody>
            <GroupName><Label $size={10.5} $ls={-0.2}>Voice</Label></GroupName>
          </Group>

          <Group $w={55}>
            <GroupBody>
              <BigButton $w={54}>
                <BigIcon>
                  <Icon w={28} h={27} sw={1.1}>
                    <path d="M9 5.500H27.500V25.500H2.500V18M11 8.500H24.500V22.500H5.500V17M13 12.500H24.500M19 12.500V22.500" />
                    <path d="M5.500 .6H12L8.500 8H12L2 18.500 5 10.500H1z" fill="#ffe27a" stroke="#eaa636" />
                  </Icon>
                </BigIcon>
                <BigLine><Label $size={11} $ls={-0.3}>Design</Label></BigLine>
                <BigLine><Label $size={11} $ls={-0.3}>Ideas</Label></BigLine>
              </BigButton>
            </GroupBody>
            <GroupName><Label $size={10.5} $ls={-0.2}>Designer</Label></GroupName>
          </Group>
          <Cell $w={16} $ml={71}>
            <Icon w={9} h={78} sw={1.2}><path d="M.5 79 4.500 75 8.500 79" /></Icon>
          </Cell>
        </Ribbon>

        <Work>
          <SlideList>
            <SlideRow $first>
              <SlideNo />
              <Thumb><ThumbTitle $w={1} /><ThumbText mt={72} lines={["·"]} /></Thumb>
            </SlideRow>
            <SlideRow>
              <SlideNo>10</SlideNo>
              <Thumb>
                <ThumbTitle $w={56}>Data OutputStream</ThumbTitle>
                <ThumbText lh={4.9} mt={-0.5} lines={["DataOutputStream merupakan class yang menyediakan", "cara praktis untuk menuliskan tipe data primitif ke output", "stream"]} />
                <ThumbText mt={7.5} lines={["Sebagian method DataOutputStream adalah"]} />
                <ThumbText mt={0.7} lh={4.9} inset={3} lines={["–writeBoolean : berfungsi menuliskan data bertipe boolean ke", "output stream"]} />
                <ThumbText mt={0.5} lh={4.9} inset={3} lines={["–writeInt : berfungsi menuliskan data bertipe integer ke output", "stream"]} />
                <ThumbText mt={0.5} lh={4.9} inset={3} lines={["–writeDouble : berfungsi menuliskan data double ke output", "stream"]} />
                <ThumbText mt={0.3} lh={4.9} inset={3} lines={["–writeUTF : berfungsi menuliskan data string menggunakan", "encoding UTF-8 yang tidak tergantung pada mesin"]} />
                <ThumbText mt={4} lines={["·"]} />
              </Thumb>
            </SlideRow>
            <SlideRow>
              <SlideNo>11</SlideNo>
              <Thumb>
                <ThumbTitle $w={111}>FileInputStream dan FileOutputStream</ThumbTitle>
                <ThumbText mt={0.5} lh={5.4} lines={["FileInputStream digunakan untuk membaca data dari file", "yang merupakan turunan langsung dari class InputStream", "dan FileOutputStream untuk menuliskan data ke file", "merupakan turunan langsung dari class OutputStream"]} />
              </Thumb>
            </SlideRow>
            <SlideRow>
              <SlideNo $on>12</SlideNo>
              <Thumb $on>
                <ThumbTitle $w={79}>Serialisasi dan Deserialisasi</ThumbTitle>
                <ThumbText lines={["Serialization adalah proses pengubahan suatu objek menjadi", "urutan bit agar dapat disimpan pada media penyimpanan", "(seperti berkas komputer, atau pada memori) atau", "ditransmisikan melalui saluran koneksi jaringan."]} />
                <ThumbText mt={6} lines={["Sedangkan Deserialization adalah kebalikan dari proses", "Serialization."]} />
                <ThumbText mt={6} lines={["Proses serialisasi suatu objek ini dapat juga disebut", "pengempisan (deflating) atau penyusunan (marshalling) objek"]} />
                <ThumbText mt={6} lines={["Stream yang digunakan untuk deserialisasi dan serialisasi secara", "berurutan adalah class Object Input Stream dan Object", "Output Stream"]} />
                <ThumbText mt={7} lines={["·"]} />
              </Thumb>
            </SlideRow>
            <SlideRow>
              <SlideNo>13</SlideNo>
              <Thumb>
                <ThumbTitle $w={84}>Serialisasi digunakan sebagai</ThumbTitle>
                <ThumbText lh={5.5} mt={0.5} lines={["Cara untuk melakukan penyimpanan objek yang lebih", "mudah dibandingkan menuliskan properti atau karakteristik", "tersebut ke dalam berkas teks dan mengambilnya", "sebagai objek"]} />
                <ThumbText lh={5.2} mt={1.5} lines={["Salah satu proses yang dilakukan dalam pemanggilan", "prosedur jarak jauh (remote procedure call), seperti SOAP"]} />
                <ThumbText lh={5.5} mt={2} lines={["Salah satu cara untuk mendistribusikan objek khususnya", "dalam arsitektur berbasis komponen, seperti", "COM, CORBA, dan sejenis"]} />
                <ThumbText lh={5.2} mt={1.5} lines={["Salah satu cara untuk mendeteksi perubahan data dalam", "satu periode waktu tertentu."]} />
              </Thumb>
            </SlideRow>
          </SlideList>
          <ScrollTrack $w={14}>
            <ScrollButton><ArrowUp /></ScrollButton>
            <ScrollThumb $mt={256} $h={127} />
            <Spacer $h={96} />
            <ScrollButton $plain><ArrowDown /></ScrollButton>
          </ScrollTrack>
          <Editor>
            <HRuler>
              {range(-25, 25).map((i) => (
                <HMark key={i}>{i % 4 === 0 ? Math.abs(i) / 2 : <HTick />}</HMark>
              ))}
            </HRuler>
            <Stage>
              <VRuler>
                {range(-19, 18).map((i) => (
                  <VMark key={i}>{i % 4 === 0 ? <VNum>{Math.abs(i) / 2}</VNum> : <VTick />}</VMark>
                ))}
              </VRuler>
              <Slide>
                <SlideTitle>{mark("_Serialisasi _dan _Deserialisasi")}</SlideTitle>
                <Bullets>
                  <Bullet $gap={27.5}>
                    <BulletArrow />
                    <div>
                      <TextLine><b>Serialization</b> {mark("_adalah _proses _pengubahan _suatu _objek _menjadi")}</TextLine>
                      <TextLine>{mark("_urutan bit agar _dapat _disimpan _pada media _penyimpanan")}</TextLine>
                      <TextLine>{mark("_(seperti _berkas _komputer, _atau _pada _memori) _atau")}</TextLine>
                      <TextLine $w={361}>{mark("_ditransmisikan _melalui _saluran _koneksi _jaringan.")}</TextLine>
                    </div>
                  </Bullet>
                  <Bullet $gap={27.5}>
                    <BulletArrow />
                    <div>
                      <TextLine>{mark("_Sedangkan")} <b><W t="Deserialization" /></b> {mark("_adalah _kebalikan _dari _proses")}</TextLine>
                      <TextLine $w={97} $ls={-0.1}>Serialization.</TextLine>
                    </div>
                  </Bullet>
                  <Bullet $gap={27.5}>
                    <BulletArrow />
                    <div>
                      <TextLine>{mark("_Proses _serialisasi _suatu _objek _ini _dapat _juga _disebut")}</TextLine>
                      <TextLine $w={457} $ls={-0.05}><W t="pengempisan" /> (<i>deflating</i>) <W t="atau" /> <W t="penyusunan" /> (<i>marshalling</i>) <W t="objek" /></TextLine>
                    </div>
                  </Bullet>
                  <Bullet $gap={0}>
                    <BulletArrow />
                    <div>
                      <TextLine $ls={-0.07}>{mark("Stream yang _digunakan _untuk _deserialisasi _dan _serialisasi _secara")}</TextLine>
                      <TextLine>{mark("_berurutan _adalah class Object Input Stream _dan Object")}</TextLine>
                      <TextLine $w={116}>Output Stream</TextLine>
                    </div>
                  </Bullet>
                </Bullets>
                <Footer>
                  <Svg width="6" height="9" viewBox="0 0 6 9"><path d="M0 0 6 4.500 0 9z" fill="#9fb6cf" /></Svg>
                  <Label $size={10} $ls={-0.2} $color="#777b7b">12</Label>
                </Footer>
              </Slide>
            </Stage>
            <Notes><Label $size={12.8} $ls={0} $color="#7a7d79">Click to add notes</Label></Notes>
          </Editor>
          <ScrollTrack $w={14}>
            <ScrollButton><ArrowUp /></ScrollButton>
            <ScrollThumb $mt={273} $h={25} />
            <Spacer $h={99} />
            <ScrollButton $plain><ArrowDown /></ScrollButton>
            <Spacer $h={1} />
            <ScrollButton $plain>
              <Svg width="6" height="7" viewBox="0 0 6 7"><path d="M0 3.200 3 0 6 3.200zM0 6 3 3 6 6zM0 6H6V7H0z" fill="#6c6f6c" /></Svg>
            </ScrollButton>
            <Spacer $h={3} />
            <ScrollButton $plain>
              <Svg width="6" height="7" viewBox="0 0 6 7"><path d="M0 0H6V1H0zM0 1H6L3 4zM0 3.800H6L3 7z" fill="#6c6f6c" /></Svg>
            </ScrollButton>
          </ScrollTrack>
        </Work>

        <Status>
          <Cell $w={86} $ml={7} $j="flex-start"><Label $size={10.5} $ls={-0.1}>Slide 12 of 16</Label></Cell>
          <Cell $w={107} $ml={8} $j="flex-start"><Label $size={10.5} $ls={-0.1}>English (Indonesia)</Label></Cell>
          <Cell $w={14} $ml={0}>
            <Icon w={12} h={13} sw={1}>
              <circle cx="5" cy="2" r="1.500" /><path d="M0 3.500 3.500 5V8L1.500 12M10 3.500 6.500 5V7M3.500 5H6.500M5 8.500 3.500 12M7 8 11.500 12.500M11.500 8 7 12.500" />
            </Icon>
          </Cell>
          <Cell $w={117} $ml={4} $j="flex-start"><Label $size={9.5} $ls={0.22} $color="#8d8f8b">Accessibility: Investigate</Label></Cell>
          <NormalView>
            <Icon w={11} h={11} sw={1.2}><path d="M.6 .6H10.400V10H.6zM3.200 3H7.800V5.700H3.200zM.6 8H10.400" /></Icon>
          </NormalView>
          <Cell $w={34} $ml={0}>
            <Icon w={13} h={12} sw={1}><path d="M.5 .5H5V4.500H.5zM8 .5H12.500V4.500H8zM.5 7.500H5V11.500H.5zM8 7.500H12.500V11.500H8z" /></Icon>
          </Cell>
          <Cell $w={41}>
            <Icon w={12} h={12} sw={1}><path d="M6 1.500V11.500M6 1.500C4 .3 2 .5 .5 .8V11C3 10.500 4.500 10.500 6 11.500 7.500 10.500 9 10.500 11.500 11V.8C10 .5 8 .3 6 1.500M2 3.500H4.500M2 5.500H4.500M2 7.500H4.500M7.500 3.500H10M7.500 5.500H10M7.500 7.500H10" /></Icon>
          </Cell>
          <Cell $w={35}>
            <Icon w={12} h={12} sw={1}><path d="M0 .5H12M1 .5V6.500H11V.5M6 6.500V11M3 11.500H9M4 3.500H8" /></Icon>
          </Cell>
          <Cell $w={20}><Icon w={7} h={1} sw={1.2}><path d="M0 .5H7" /></Icon></Cell>
          <Cell $w={92}>
            <Icon w={92} h={10} sw={1} c="#8a8c88">
              <path d="M0 5.500H92M46.500 3V8" /><rect x="27" y="0" width="4" height="10" fill="#6b6d69" stroke="none" />
            </Icon>
          </Cell>
          <Cell $w={18}><Icon w={7} h={7} sw={1}><path d="M0 3.500H7M3.500 0V7" /></Icon></Cell>
          <Cell $w={35}><Label $size={10} $ls={-0.3} $color="#8b8d89">64%</Label></Cell>
          <Cell $w={20}>
            <Icon w={13} h={13} sw={1}><path d="M3.500 3.500H9.500V9.500H3.500zM5 1.800 6.500 .5 8 1.800M5 11.200 6.500 12.500 8 11.200M1.800 5 .5 6.500 1.800 8M11.200 5 12.500 6.500 11.200 8" /></Icon>
          </Cell>
        </Status>
      </Window>

      <Switcher>
        <TaskCard>
          <TaskHead>
            <PptLogo />
            <Cell $w={164} $ml={7} $j="flex-start"><Label $size={11.2} $ls={-0.5} $bold>Materi 8_Exception Handling.p...</Label></Cell>
          </TaskHead>
          <Preview />
        </TaskCard>
        <TaskCard $hot>
          <TaskHead>
            <PptLogo />
            <Cell $w={140} $ml={7} $j="flex-start"><Label $size={11.2} $ls={-0.55} $bold>Materi 9_Serialisasi dan D...</Label></Cell>
            <Cell $w={12} $ml={10}><Icon w={11} h={11} c="#fff" sw={1.4}><path d="M.5 .5 10.500 10.500M10.500 .5 .5 10.500" /></Icon></Cell>
          </TaskHead>
          <Preview hot />
        </TaskCard>
      </Switcher>
      <Backdrop />
      <Pointer>
        <Svg width="12" height="19" viewBox="0 0 12 19">
          <path d="M.6 1V15L3.800 12 6.400 17.500 8.800 16.400 6.300 11.200H10.700z" fill="#fff" stroke="#4a4a4a" strokeWidth="1" />
        </Svg>
      </Pointer>
    </Screen>
  );
}
